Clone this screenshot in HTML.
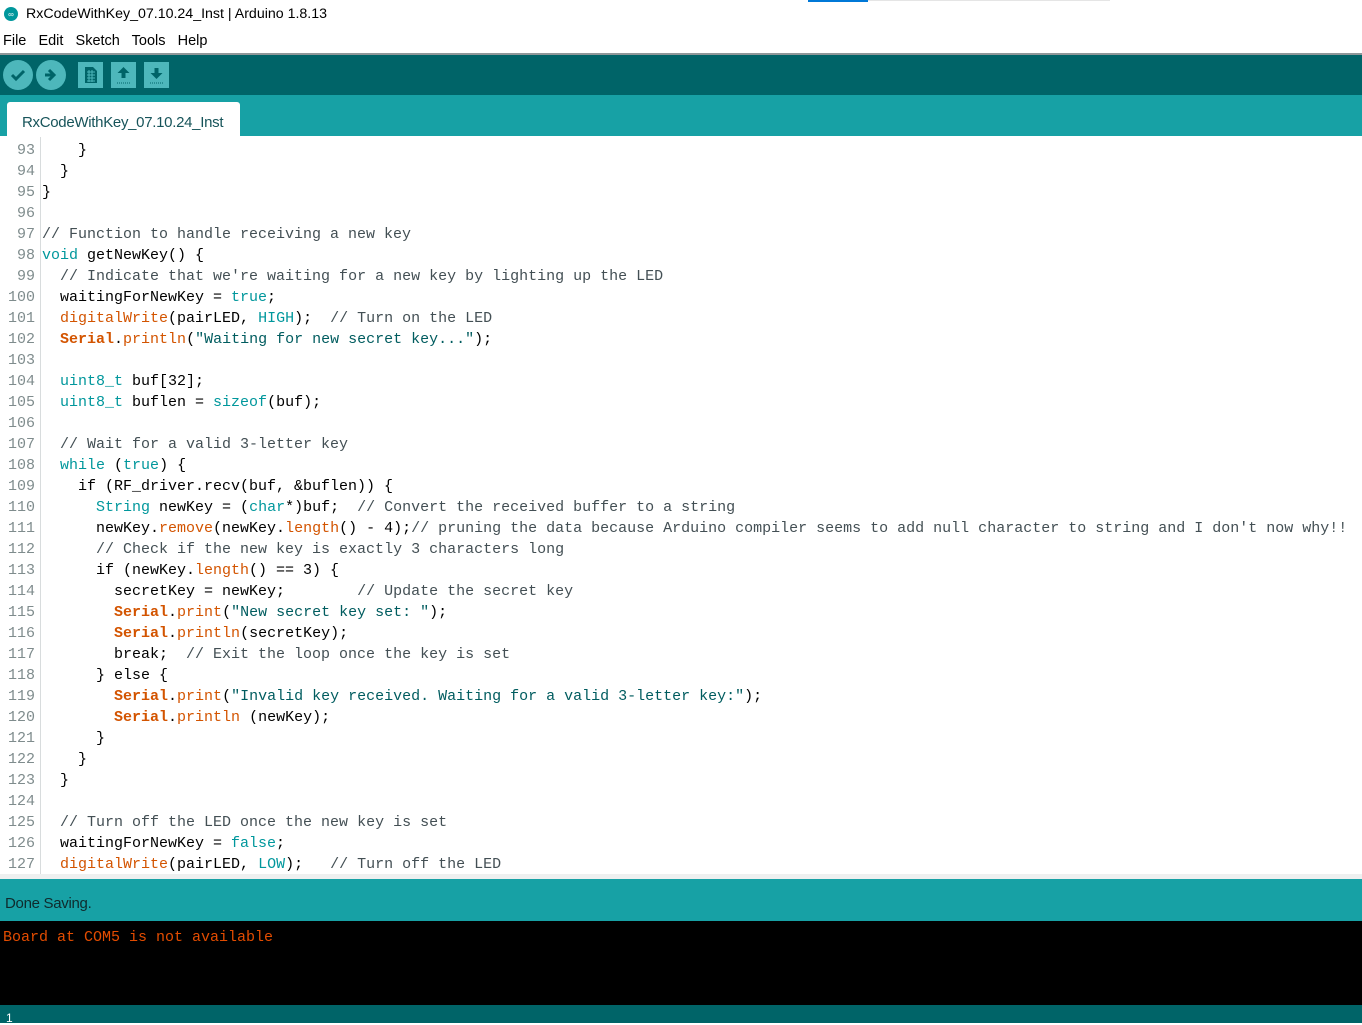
<!DOCTYPE html>
<html><head><meta charset="utf-8"><style>
*{margin:0;padding:0;box-sizing:border-box}
body{width:1362px;height:1023px;overflow:hidden;background:#fff;font-family:"Liberation Sans",sans-serif;position:relative}
.abs{position:absolute}
#title{left:0;top:0;width:1362px;height:30px;font-size:14.2px;color:#000}
#menu{top:33px;left:3px;font-size:14.5px;color:#000;word-spacing:0px}
#tb{left:0;top:53px;width:1362px;height:42px;background:#006468;border-top:2px solid #8f9799}
.c{position:absolute;width:30px;height:30px;border-radius:50%;background:#4db7bb;top:5px}
.s{position:absolute;width:25px;height:26px;background:#4db7bb;top:7px}
#tabs{left:0;top:95px;width:1362px;height:41px;background:#17a1a5}
#tab{left:7px;top:102px;width:233px;height:34px;background:#fff;border-radius:3px 3px 0 0;color:#17545a;font-size:15px;padding:12px 0 0 15px;letter-spacing:-.3px}
#gut{left:40px;top:137px;width:1px;height:737px;background:#d8dcdd}
pre{font-family:"Liberation Mono",monospace;font-size:15px;line-height:21px;white-space:pre}
#nums{left:0;top:140px;width:35px;text-align:right;color:#7f8c8d}
#code{left:42px;top:140px;color:#000}
.k{color:#00979c}.f{color:#d35400}.b{color:#d35400;font-weight:bold}.m{color:#434f54}.q{color:#005c5f}
#sep{left:0;top:874px;width:1362px;height:5px;background:#eef0f0}
#stat{left:0;top:879px;width:1362px;height:42px;background:#17a1a5;color:#0f2b2d;font-size:15px;padding:16px 0 0 5px;letter-spacing:-.3px}
#con{left:0;top:921px;width:1362px;height:84px;background:#000}
#err{left:3px;top:927px;color:#e34c00;font-size:15px}
#bot{left:0;top:1005px;width:1362px;height:18px;background:#006468;color:#fff;font-size:12px;padding:6px 0 0 6px}
</style></head><body>
<div class="abs" style="left:808px;top:0;width:60px;height:2px;background:#0078d7"></div>
<div class="abs" style="left:868px;top:0;width:242px;height:1px;background:#e5e5e5"></div>
<div class="abs" id="title"><svg class="abs" style="left:4px;top:7px" width="14" height="14"><circle cx="7" cy="7" r="7" fill="#00979c"/><text x="7" y="10" font-size="8" fill="#fff" text-anchor="middle" font-family="Liberation Sans">∞</text></svg><span class="abs" style="left:26px;top:6px;white-space:nowrap">RxCodeWithKey_07.10.24_Inst | Arduino 1.8.13</span></div>
<div class="abs" id="menu">File&nbsp;&nbsp; Edit&nbsp;&nbsp; Sketch&nbsp;&nbsp; Tools&nbsp;&nbsp; Help</div>
<div class="abs" id="tb">
<div class="c" style="left:3px"><svg width="30" height="30"><path d="M9 15l4 4 8-8" stroke="#006468" stroke-width="3" fill="none"/></svg></div>
<div class="c" style="left:36px"><svg width="30" height="30"><path d="M9 15h8M13 10l5 5-5 5" stroke="#006468" stroke-width="3" fill="none"/></svg></div>
<div class="s" style="left:78px"><svg width="25" height="26"><path d="M7 5h8l4 4v12H7z" fill="#006468"/><path d="M9 10h8M9 13h8M9 16h8M9 19h8M11 8v12M14 8v12" stroke="#4db7bb" stroke-width="1"/></svg></div>
<div class="s" style="left:111px"><svg width="25" height="26"><path d="M12.5 5l6 6h-4v5h-4v-5h-4z" fill="#006468"/><path d="M6 21h13" stroke="#006468" stroke-dasharray="1 1"/></svg></div>
<div class="s" style="left:144px"><svg width="25" height="26"><path d="M12.5 17l6-6h-4V6h-4v5h-4z" fill="#006468"/><path d="M6 21h13" stroke="#006468" stroke-dasharray="1 1"/></svg></div>
</div>
<div class="abs" id="tabs"></div>
<div class="abs" id="tab">RxCodeWithKey_07.10.24_Inst</div>
<div class="abs" id="gut"></div>
<pre class="abs" id="nums">93
94
95
96
97
98
99
100
101
102
103
104
105
106
107
108
109
110
111
112
113
114
115
116
117
118
119
120
121
122
123
124
125
126
127</pre>
<pre class="abs" id="code">    }
  }
}

<span class="m">// Function to handle receiving a new key</span>
<span class="k">void</span> getNewKey() {
  <span class="m">// Indicate that we're waiting for a new key by lighting up the LED</span>
  waitingForNewKey = <span class="k">true</span>;
  <span class="f">digitalWrite</span>(pairLED, <span class="k">HIGH</span>);  <span class="m">// Turn on the LED</span>
  <span class="b">Serial</span>.<span class="f">println</span>(<span class="q">"Waiting for new secret key..."</span>);

  <span class="k">uint8_t</span> buf[32];
  <span class="k">uint8_t</span> buflen = <span class="k">sizeof</span>(buf);

  <span class="m">// Wait for a valid 3-letter key</span>
  <span class="k">while</span> (<span class="k">true</span>) {
    if (RF_driver.recv(buf, &amp;buflen)) {
      <span class="k">String</span> newKey = (<span class="k">char</span>*)buf;  <span class="m">// Convert the received buffer to a string</span>
      newKey.<span class="f">remove</span>(newKey.<span class="f">length</span>() - 4);<span class="m">// pruning the data because Arduino compiler seems to add null character to string and I don't now why!!</span>
      <span class="m">// Check if the new key is exactly 3 characters long</span>
      if (newKey.<span class="f">length</span>() == 3) {
        secretKey = newKey;        <span class="m">// Update the secret key</span>
        <span class="b">Serial</span>.<span class="f">print</span>(<span class="q">"New secret key set: "</span>);
        <span class="b">Serial</span>.<span class="f">println</span>(secretKey);
        break;  <span class="m">// Exit the loop once the key is set</span>
      } else {
        <span class="b">Serial</span>.<span class="f">print</span>(<span class="q">"Invalid key received. Waiting for a valid 3-letter key:"</span>);
        <span class="b">Serial</span>.<span class="f">println</span> (newKey);
      }
    }
  }

  <span class="m">// Turn off the LED once the new key is set</span>
  waitingForNewKey = <span class="k">false</span>;
  <span class="f">digitalWrite</span>(pairLED, <span class="k">LOW</span>);   <span class="m">// Turn off the LED</span></pre>
<div class="abs" id="sep"></div>
<div class="abs" id="stat">Done Saving.</div>
<div class="abs" id="con"></div>
<pre class="abs" id="err">Board at COM5 is not available</pre>
<div class="abs" id="bot">1</div>
</body></html>
